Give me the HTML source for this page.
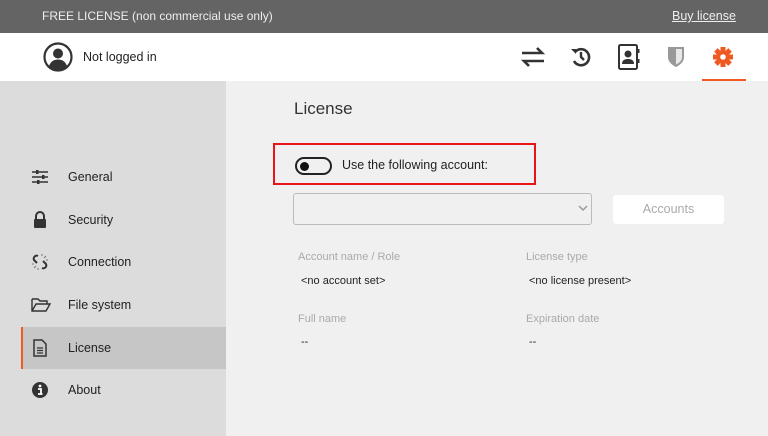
<!DOCTYPE html>
<html><head><meta charset="utf-8"><style>
*{margin:0;padding:0;box-sizing:border-box}
body{width:768px;height:436px;overflow:hidden;font-family:"Liberation Sans",sans-serif;background:#f0f0f0;position:relative;color:#222}
.top{position:absolute;left:0;top:0;width:768px;height:33px;background:#646464;color:#eee;font-size:12px}
.top .l{position:absolute;left:42px;top:9px}
.top .r{position:absolute;left:672px;top:9px;text-decoration:underline;font-size:12.5px}
.hdr{position:absolute;left:0;top:33px;width:768px;height:48px;background:#fff}
.side{position:absolute;left:0;top:81px;width:226px;height:355px;background:#dcdcdc}
.item{position:absolute;left:21px;width:205px;height:42px;font-size:12.5px}
.item span{position:absolute;left:47px;top:14px}
.item svg{position:absolute;left:10px;top:12px}
.act{background:#c6c6c6;border-left:2px solid #f05a22}
.abs{position:absolute}
.lbl{position:absolute;font-size:11px;color:#aaa}
.val{position:absolute;font-size:11px;color:#222}
</style></head><body>
<div class="top"><span class="l">FREE LICENSE (non commercial use only)</span><span class="r">Buy license</span></div>
<div class="hdr">
<svg class="abs" style="left:43px;top:9px" width="30" height="30" viewBox="0 0 30 30"><circle cx="15" cy="15" r="13.5" fill="#fff" stroke="#333" stroke-width="2.2"/><circle cx="15" cy="11.5" r="5" fill="#333"/><path d="M6 24c2-5 5-6.5 9-6.5s7 1.5 9 6.5c-2.5 2.5-5.5 3.5-9 3.5s-6.5-1-9-3.5z" fill="#333"/></svg>
<span class="abs" style="left:83px;top:17px;font-size:12.5px">Not logged in</span>
<svg class="abs" style="left:520px;top:14px" width="26" height="20" viewBox="0 0 26 20"><path d="M2 6h20M17 1l5 5-5 0M24 14H4M9 19l-5-5 5 0" stroke="#333" stroke-width="2.6" fill="none"/></svg>
<svg class="abs" style="left:569px;top:12px" width="24" height="24" viewBox="0 0 24 24"><path d="M6 7a8 8 0 1 1-1 9" stroke="#333" stroke-width="2.6" fill="none"/><path d="M2 4l5 0 0 5z" fill="#333"/><path d="M12 7v5l3 3" stroke="#333" stroke-width="2.4" fill="none"/></svg>
<svg class="abs" style="left:617px;top:10px" width="24" height="28" viewBox="0 0 24 28"><rect x="2" y="2" width="18" height="24" rx="1.5" fill="none" stroke="#333" stroke-width="2"/><rect x="20" y="6" width="2.5" height="4" fill="#333"/><rect x="20" y="16" width="2.5" height="4" fill="#333"/><circle cx="11" cy="11" r="3.5" fill="#333"/><path d="M5 21c0-4 3-5 6-5s6 1 6 5z" fill="#333"/></svg>
<svg class="abs" style="left:666px;top:12px" width="20" height="24" viewBox="0 0 20 24"><path d="M2 2h16v10c0 5-4 8-8 10C6 20 2 17 2 12z" fill="#999"/><path d="M10 4h6v8c0 4-3 6-6 7.5z" fill="#e8e8e8"/></svg>
<svg class="abs" style="left:712px;top:13px" width="22" height="22" viewBox="0 0 22 22"><g fill="#f05a22" transform="translate(11 11)"><circle r="6.5"/><g><rect x="-2.5" y="-10" width="5" height="5"/><rect x="-2.5" y="5" width="5" height="5"/><rect x="-10" y="-2.5" width="5" height="5"/><rect x="5" y="-2.5" width="5" height="5"/></g><g transform="rotate(45)"><rect x="-2.5" y="-10" width="5" height="5"/><rect x="-2.5" y="5" width="5" height="5"/><rect x="-10" y="-2.5" width="5" height="5"/><rect x="5" y="-2.5" width="5" height="5"/></g></g><circle cx="11" cy="11" r="2.8" fill="#fff"/></svg>
<div class="abs" style="left:702px;top:46px;width:44px;height:2px;background:#f05a22"></div>
</div>
<div class="side">
<div class="item" style="top:75px"><svg width="18" height="18" viewBox="0 0 18 18"><path d="M1 4h16M1 9h16M1 14h16" stroke="#333" stroke-width="1.6"/><rect x="5" y="2" width="2.5" height="4" fill="#333"/><rect x="11" y="7" width="2.5" height="4" fill="#333"/><rect x="6" y="12" width="2.5" height="4" fill="#333"/></svg><span>General</span></div>
<div class="item" style="top:118px"><svg width="18" height="18" viewBox="0 0 18 18"><path d="M5 8V5a4 4 0 0 1 8 0v3" stroke="#333" stroke-width="2" fill="none"/><rect x="3" y="8" width="12" height="9" rx="1" fill="#333"/></svg><span>Security</span></div>
<div class="item" style="top:160px"><svg width="18" height="18" viewBox="0 0 18 18"><path d="M7 3a3 3 0 0 0-4 4l3 3M11 15a3 3 0 0 0 4-4l-3-3" stroke="#333" stroke-width="2" fill="none"/><path d="M11 1v2M15 3l-2 2M17 7h-2M1 11h2M3 15l2-2M7 17v-2" stroke="#777" stroke-width="1"/></svg><span>Connection</span></div>
<div class="item" style="top:203px"><svg width="20" height="18" viewBox="0 0 20 18"><path d="M1 3h6l2 2h7v3M1 3v12h14l4-7H5L1 15" stroke="#333" stroke-width="1.4" fill="none"/></svg><span>File system</span></div>
<div class="item act" style="top:246px"><svg style="left:8px" width="18" height="18" viewBox="0 0 18 18"><path d="M3 1h8l4 4v12H3z" stroke="#333" stroke-width="1.5" fill="none"/><path d="M6 9h6M6 11.5h6M6 14h6" stroke="#333" stroke-width="1.3"/></svg><span style="left:45px">License</span></div>
<div class="item" style="top:288px"><svg width="18" height="18" viewBox="0 0 18 18"><circle cx="9" cy="9" r="8" fill="#333"/><circle cx="9" cy="5" r="1.4" fill="#fff"/><path d="M7 8h3v5h1.5M7 13h4.5" stroke="#fff" stroke-width="1.8" fill="none"/></svg><span>About</span></div>
</div>
<div class="abs" style="left:294px;top:99px;font-size:17px;color:#333">License</div>
<div class="abs" style="left:273px;top:143px;width:263px;height:42px;border:2px solid #e8141a"></div>
<div class="abs" style="left:295px;top:157px;width:37px;height:18px;border:2px solid #222;border-radius:9px"></div>
<div class="abs" style="left:300px;top:162px;width:9px;height:9px;border-radius:50%;background:#111"></div>
<div class="abs" style="left:342px;top:158px;font-size:12.5px">Use the following account:</div>
<div class="abs" style="left:293px;top:193px;width:299px;height:32px;border:1px solid #bbb;border-radius:3px;background:#f0f0f0"></div>
<svg class="abs" style="left:578px;top:205px" width="10" height="7" viewBox="0 0 10 7"><path d="M1 1l4 4 4-4" stroke="#999" stroke-width="1.5" fill="none"/></svg>
<div class="abs" style="left:613px;top:195px;width:111px;height:29px;background:#fff;border-radius:3px;color:#aaa;font-size:12.5px;text-align:center;line-height:29px">Accounts</div>
<div class="lbl" style="left:298px;top:251px">Account name / Role</div>
<div class="val" style="left:301px;top:275px">&lt;no account set&gt;</div>
<div class="lbl" style="left:526px;top:251px">License type</div>
<div class="val" style="left:529px;top:275px">&lt;no license present&gt;</div>
<div class="lbl" style="left:298px;top:313px">Full name</div>
<div class="val" style="left:301px;top:336px">--</div>
<div class="lbl" style="left:526px;top:313px">Expiration date</div>
<div class="val" style="left:529px;top:336px">--</div>
</body></html>
